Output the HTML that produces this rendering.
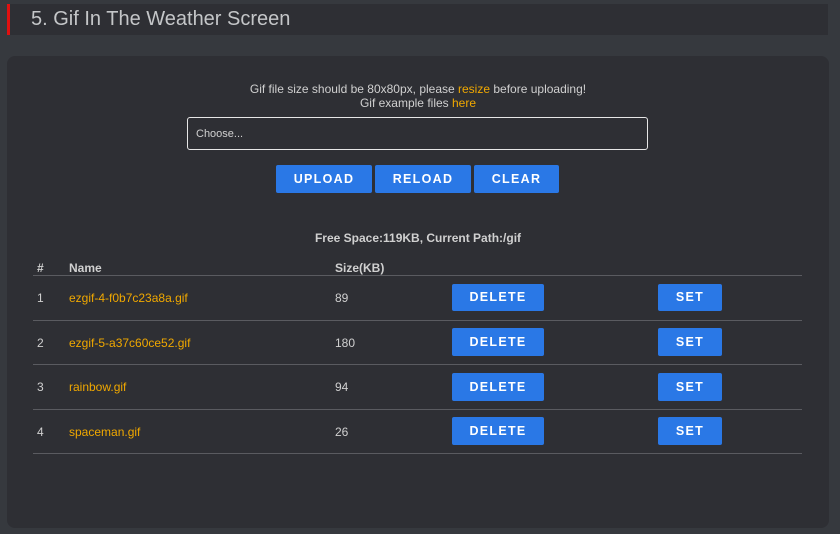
<!DOCTYPE html>
<html><head><style>
body{margin:0;width:840px;height:534px;background:#36393e;font-family:"Liberation Sans",sans-serif;position:relative;overflow:hidden}
.hdr{position:absolute;left:7px;top:4px;width:821px;height:31px;background:#2e2f34;border-left:3px solid #e01010;box-sizing:border-box}
.hdr span{position:absolute;left:21px;top:4px;font-size:20px;color:#c4c6c8}
.panel{position:absolute;left:7px;top:56px;width:822px;height:472px;background:#2e2f34;border-radius:8px}
.t{position:absolute;color:#d0d0d0;font-size:12px}
.o{color:#f0a800}
.inp{position:absolute;left:187px;top:117px;width:461px;height:33px;border:1px solid #e6e6e6;border-radius:3px;box-sizing:border-box;color:#d0d0d0;font-size:11px;padding:10px 8px}
.b{position:absolute;background:#2a78e6;color:#fff;font-weight:bold;font-size:12.5px;letter-spacing:1.3px;text-align:center;border-radius:2px}
.line{position:absolute;left:33px;width:769px;height:1px;background:#5a5b60}
.c{position:absolute;font-size:12px;color:#d0d0d0}
.c.o{color:#f0a800}
</style></head><body>
<div class="hdr"><span>5. Gif In The Weather Screen</span></div>
<div class="panel"></div>
<div class="t" style="left:0;width:836px;text-align:center;top:82px">Gif file size should be 80x80px, please <span class="o">resize</span> before uploading!</div>
<div class="t" style="left:0;width:836px;text-align:center;top:96px">Gif example files <span class="o">here</span></div>
<div class="inp">Choose...</div>
<div class="b" style="left:276px;top:165px;width:96px;height:28px;line-height:28px">UPLOAD</div>
<div class="b" style="left:375px;top:165px;width:96px;height:28px;line-height:28px">RELOAD</div>
<div class="b" style="left:474px;top:165px;width:85px;height:28px;line-height:28px">CLEAR</div>
<div class="t" style="left:0;width:836px;text-align:center;top:231px;font-weight:bold">Free Space:119KB, Current Path:/gif</div>
<div class="c" style="left:37px;top:261px;font-weight:bold">#</div>
<div class="c" style="left:69px;top:261px;font-weight:bold">Name</div>
<div class="c" style="left:335px;top:261px;font-weight:bold">Size(KB)</div>
<div class="line" style="top:275px"></div>

<div class="c" style="left:37px;top:291px">1</div><div class="c o" style="left:69px;top:291px">ezgif-4-f0b7c23a8a.gif</div><div class="c" style="left:335px;top:291px">89</div>
<div class="b" style="left:452px;top:284px;width:92px;height:27px;line-height:27px">DELETE</div><div class="b" style="left:658px;top:284px;width:64px;height:27px;line-height:27px">SET</div>
<div class="line" style="top:320px"></div>

<div class="c" style="left:37px;top:336px">2</div><div class="c o" style="left:69px;top:336px">ezgif-5-a37c60ce52.gif</div><div class="c" style="left:335px;top:336px">180</div>
<div class="b" style="left:452px;top:328px;width:92px;height:28px;line-height:28px">DELETE</div><div class="b" style="left:658px;top:328px;width:64px;height:28px;line-height:28px">SET</div>
<div class="line" style="top:364px"></div>

<div class="c" style="left:37px;top:380px">3</div><div class="c o" style="left:69px;top:380px">rainbow.gif</div><div class="c" style="left:335px;top:380px">94</div>
<div class="b" style="left:452px;top:373px;width:92px;height:28px;line-height:28px">DELETE</div><div class="b" style="left:658px;top:373px;width:64px;height:28px;line-height:28px">SET</div>
<div class="line" style="top:409px"></div>

<div class="c" style="left:37px;top:425px">4</div><div class="c o" style="left:69px;top:425px">spaceman.gif</div><div class="c" style="left:335px;top:425px">26</div>
<div class="b" style="left:452px;top:417px;width:92px;height:28px;line-height:28px">DELETE</div><div class="b" style="left:658px;top:417px;width:64px;height:28px;line-height:28px">SET</div>
<div class="line" style="top:453px"></div>
</body></html>
